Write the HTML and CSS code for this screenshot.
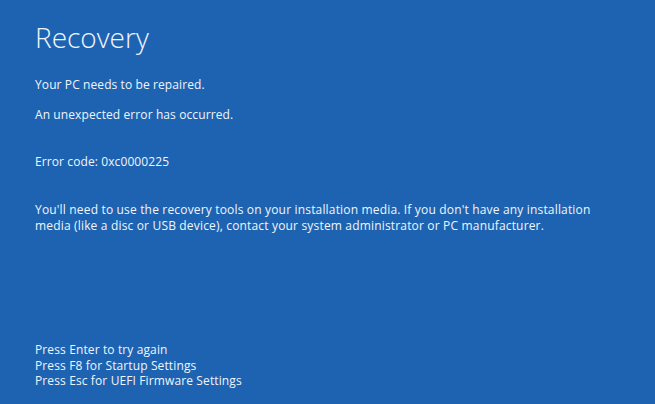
FILE: index.html
```html
<!DOCTYPE html>
<html lang="en">
<head>
  <meta charset="UTF-8" />
  <meta name="viewport" content="width=device-width, initial-scale=1.0" />
  <title>Recovery</title>
  <link rel="stylesheet" href="styles.css">
</head>
<body>
  <div class="screen">
    <h1 class="title">Recovery</h1>
    <p class="msg first">Your PC needs to be repaired.</p>
    <p class="msg">An unexpected error has occurred.</p>
    <p class="msg code">Error code: 0xc0000225</p>
    <p class="info">You'll need to use the recovery tools on your installation media. If you don't have any installation<br>media (like a disc or USB device), contact your system administrator or PC manufacturer.</p>
    <div class="keys">
      <div>Press Enter to try again</div>
      <div>Press F8 for Startup Settings</div>
      <div>Press Esc for UEFI Firmware Settings</div>
    </div>
  </div>
</body>
</html>
```

FILE: styles.css
```css
html, body { margin: 0; padding: 0; }
body { background: #1d63b2; color: #f0f5fb; font-family: "Open Sans", "Noto Sans", sans-serif; }
.screen { height: 404px; box-sizing: border-box; padding: 20px 35px 15px; display: flex; flex-direction: column; }
.title { margin: 0; font-size: 28px; font-weight: 300; line-height: 34px; }
.msg { margin: 15px 0 0; font-size: 12px; line-height: 15px; letter-spacing: 0.1px; }
.msg.first { margin-top: 23px; }
.msg.code { margin-top: 32px; }
.info { margin: 33px 0 0; font-size: 12px; line-height: 15.5px; letter-spacing: 0.17px; }
.keys { margin-top: auto; font-size: 12px; line-height: 15.6px; letter-spacing: 0.12px; }
```
